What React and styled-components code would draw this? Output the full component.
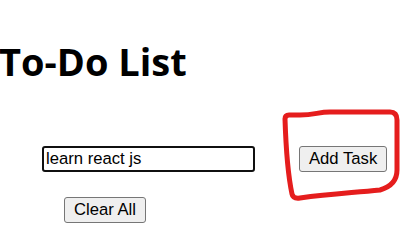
import React, { useState } from "react";
import styled, { createGlobalStyle } from "styled-components";

const GlobalStyle = createGlobalStyle`
  html, body {
    margin: 0;
    padding: 0;
    background: #ffffff;
    overflow: hidden;
  }
`;

const Page = styled.div`
  position: relative;
  width: 416px;
  height: 243px;
  display: flex;
  flex-flow: column;
`;

const Heading = styled.h1`
  font-family: "Open Sans", "Noto Sans", sans-serif;
  font-weight: 700;
  font-size: 38px;
  line-height: 48px;
  color: #000000;
  margin: 37px 0 0 -1px;
`;

const Row = styled.div`
  display: flex;
  align-items: center;
  gap: 44px;
  padding-left: 42px;
  margin-top: 61px;
`;

const Input = styled.input`
  box-sizing: border-box;
  width: 213px;
  height: 26px;
  border: 2px solid #101010;
  border-radius: 3px;
  padding: 0 2px;
  font-family: "Liberation Sans", Arial, sans-serif;
  font-size: 16.67px;
  color: #000000;
  outline: none;
`;

const Button = styled.button`
  box-sizing: border-box;
  height: 26px;
  padding: 0 9px;
  margin-left: ${(p) => p.$indent || 0}px;
  border: 1px solid #767676;
  border-radius: 3px;
  background: #efefef;
  font-family: "Liberation Sans", Arial, sans-serif;
  font-size: 16.67px;
  color: #000000;
  align-self: flex-start;
`;

const ClearRow = styled.div`
  display: flex;
  margin-top: 25px;
`;

const Annotation = styled.svg`
  position: absolute;
  left: 0;
  top: 0;
  pointer-events: none;
`;

const App = () => {
  const [task, setTask] = useState("learn react js");
  return (
    <Page>
      <GlobalStyle />
      <Heading>To-Do List</Heading>
      <Row>
        <Input value={task} onChange={(e) => setTask(e.target.value)} />
        <Button>Add Task</Button>
      </Row>
      <ClearRow>
        <Button $indent={64}>Clear All</Button>
      </ClearRow>
      <Annotation width="416" height="243" viewBox="0 0 416 243">
        <path
          d="M 285 119 C 286 150, 289 180, 292 194 Q 293 199, 300 198 C 330 194, 350 193, 380 190 Q 397 185, 397 170 L 397 120 Q 397 112, 390 112 L 330 112 C 318 112, 315 115, 300 115 L 289 115 Q 285 115, 285 119"
          fill="none"
          stroke="#e51d1d"
          strokeWidth="5"
          strokeLinecap="round"
          strokeLinejoin="round"
        />
      </Annotation>
    </Page>
  );
};

export default App;
